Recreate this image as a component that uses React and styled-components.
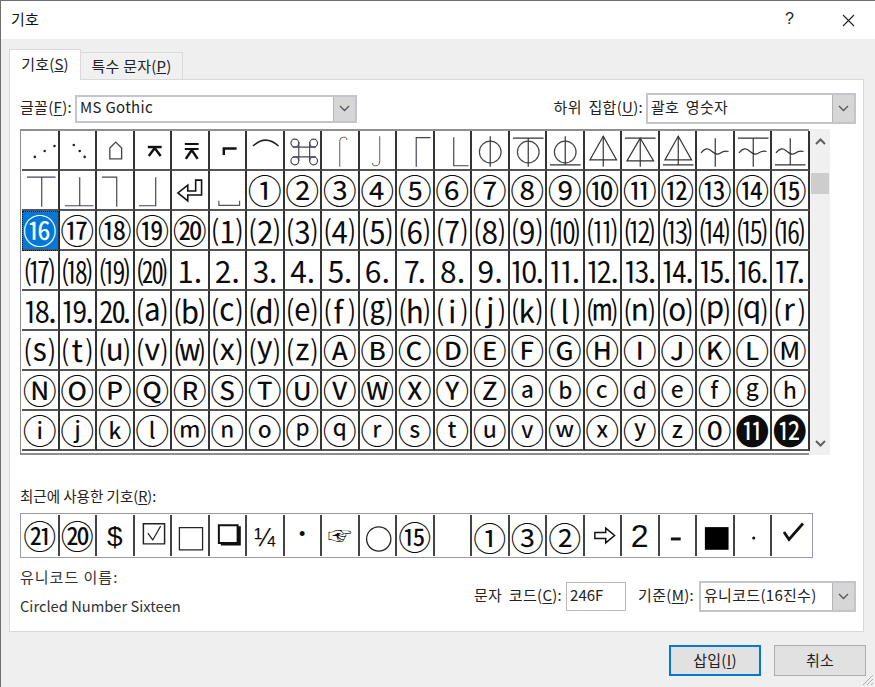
import React from 'react';
import styled, { createGlobalStyle } from 'styled-components';

const GlobalStyle = createGlobalStyle`
  html, body { margin: 0; padding: 0; background: #efefef; }
  body {
    font-family: "Noto Sans CJK KR", "Noto Sans", sans-serif;
    font-size: 15px;
    color: #222;
  }
`;

const Window = styled.div`
  position: relative;
  box-sizing: border-box;
  width: 875px;
  height: 687px;
  overflow: hidden;
  background: #efefef;
  border-top: 1px solid #6f6f6f;
  border-left: 1px solid #6f6f6f;
  display: flex;
  flex-direction: column;
`;

const TitleBar = styled.div`
  height: 38px;
  flex: none;
  background: #fff;
  display: flex;
  align-items: center;
  padding: 0 20px 0 10px;
`;

const Title = styled.div`
  flex: 1;
  font-size: 15px;
  color: #111;
  padding-bottom: 3px;
  letter-spacing: 0.3px;
`;

const HelpMark = styled.span`
  font-family: "Liberation Sans", sans-serif;
  font-size: 16px;
  width: 57px;
  padding-bottom: 2px;
`;

const Tabs = styled.div`
  display: flex;
  align-items: flex-end;
  height: 41px;
  flex: none;
  padding-left: 8px;
  margin-bottom: -1px;
  position: relative;
  z-index: 1;
`;

const Tab = styled.div`
  box-sizing: border-box;
  width: ${p => (p.$active ? 72 : 102)}px;
  height: ${p => (p.$active ? 31 : 28)}px;
  padding-bottom: ${p => (p.$active ? 4 : 1)}px;
  background: ${p => (p.$active ? '#fff' : '#f0f0f0')};
  border: 1px solid #d9d9d9;
  border-bottom: ${p => (p.$active ? 'none' : '1px solid #d9d9d9')};
  border-left: ${p => (p.$active ? '1px solid #d9d9d9' : 'none')};
  display: flex;
  align-items: center;
  justify-content: center;
  white-space: nowrap;
  letter-spacing: 0.2px;
`;

const Panel = styled.div`
  box-sizing: border-box;
  margin-left: 8px;
  width: 855px;
  height: 553px;
  flex: none;
  background: #fff;
  border: 1px solid #d9d9d9;
  padding: 13px 7px 0 10px;
  display: flex;
  flex-direction: column;
`;

const TopRow = styled.div`
  display: flex;
  align-items: center;
  height: 31px;
  flex: none;
`;

const Label = styled.span`
  white-space: nowrap;
  line-height: 20px;
  padding-bottom: 3px;
  margin-right: ${p => p.$gap || 0}px;
  letter-spacing: 0.3px;
  word-spacing: 3px;
  u { text-underline-offset: 2px; }
`;

const Spacer = styled.div`
  flex: 1;
`;

const Combo = styled.div`
  box-sizing: border-box;
  width: ${p => p.$width}px;
  height: ${p => p.$height}px;
  border: 2px solid #c4c4cc;
  display: flex;
  align-items: center;
  background: #fff;
`;

const ComboText = styled.div`
  flex: 1;
  padding: 0 0 3px 3px;
  white-space: nowrap;
  line-height: 20px;
  letter-spacing: 0.3px;
  word-spacing: ${p => (p.$latin ? 0 : 3)}px;
`;

const ComboButton = styled.div`
  width: 21px;
  height: 100%;
  flex: none;
  background: #d6d6d6;
  border-left: 1px solid #b5b5b5;
  display: flex;
  align-items: center;
  justify-content: center;
`;

const GridRow = styled.div`
  display: flex;
  margin-top: 5px;
  flex: none;
`;

const SymbolGrid = styled.div`
  display: grid;
  grid-template-columns: repeat(21, 37.5px);
  grid-auto-rows: 40px;
  width: 789px;
  box-sizing: border-box;
  padding-left: 1px;
  border-top: 2px solid #8e8e8e;
  border-left: 1px solid #8e8e8e;
  border-bottom: 2px solid #8e8e8e;
`;

const Cell = styled.div`
  box-sizing: border-box;
  border-right: 2px solid #333;
  border-bottom: 2px solid #555;
  display: flex;
  align-items: center;
  justify-content: center;
  font-family: "Noto Sans CJK KR", "DejaVu Sans", sans-serif;
  font-size: ${p => (p.$round ? 34 : 30)}px;
  line-height: 38px;
  color: #0c0c0c;
  white-space: nowrap;
  background: ${p => (p.$selected ? '#0078d7' : '#fff')};
  outline: ${p => (p.$selected ? '1px dotted #111' : 'none')};
  outline-offset: -1px;
  ${p => p.$selected && 'color: #fff;'}
`;

const Scrollbar = styled.div`
  width: 20px;
  height: 326px;
  margin-left: 1px;
  background: #f0f0f0;
  display: flex;
  flex-direction: column;
  align-items: center;
  flex: none;
`;

const ScrollBtn = styled.div`
  height: 24px;
  flex: none;
  display: flex;
  align-items: center;
  justify-content: center;
`;

const ScrollThumb = styled.div`
  width: 18px;
  height: 21px;
  margin-top: 20px;
  background: #cdcdcd;
  flex: none;
`;

const RecentLabel = styled.div`
  margin-top: 31px;
  margin-bottom: 7px;
  line-height: 20px;
  flex: none;
  font-size: 14.500px;
  u { text-underline-offset: 2px; }
`;

const RecentStrip = styled.div`
  display: grid;
  grid-template-columns: repeat(21, 37.5px);
  width: 793px;
  height: 45px;
  box-sizing: border-box;
  flex: none;
  padding: 1px 0 1px 1px;
  border: 1px solid #9a9aa2;
`;

const RecentCell = styled.div`
  box-sizing: border-box;
  border-right: ${p => (p.$last ? 'none' : '2px solid #444')};
  display: flex;
  align-items: center;
  justify-content: center;
  font-family: ${p => (p.$latin ? '"Liberation Sans", sans-serif' : '"Noto Sans CJK KR", "DejaVu Sans", sans-serif')};
  font-size: ${p => p.$size || 33}px;
  color: #0c0c0c;
  line-height: 41px;
  height: 41px;
  white-space: nowrap;
  padding-top: ${p => Math.max(p.$drop || 0, 0)}px;
  padding-bottom: ${p => Math.max(-(p.$drop || 0), 0)}px;
`;

const BottomRow = styled.div`
  display: flex;
  margin-top: 11px;
  flex: none;
`;

const InfoColumn = styled.div`
  flex: 1;
  display: flex;
  flex-direction: column;
  gap: 9px;
  margin-top: -2px;
`;

const InfoText = styled.div`
  line-height: 20px;
  white-space: nowrap;
  font-size: ${p => p.$size || 15}px;
  letter-spacing: ${p => p.$track || 0}px;
  color: #333;
`;

const CodeFields = styled.div`
  display: flex;
  align-items: center;
  height: 32px;
  margin-top: 11px;
`;

const CodeInput = styled.div`
  box-sizing: border-box;
  width: 60px;
  height: 29px;
  border: 1px solid #b8b8c0;
  padding-left: 3px;
  line-height: 24px;
  margin: 0 12px 0 4px;
`;

const Footer = styled.div`
  display: flex;
  justify-content: flex-end;
  gap: 13px;
  padding: 13px 9px 0 0;
`;

const Button = styled.div`
  box-sizing: border-box;
  width: 92px;
  height: 31px;
  padding-bottom: 2px;
  background: #e1e1e1;
  border: ${p => (p.$primary ? '2px solid #0078d7' : '1px solid #adadad')};
  display: flex;
  align-items: center;
  justify-content: center;
  letter-spacing: 0.3px;
  u { text-underline-offset: 2px; }
`;

const Grip = styled.svg`
  position: absolute;
  right: 1px;
  bottom: 1px;
`;

const Line = ({ d, w = 1.2, c = '#333', fill = 'none' }) => (
  <path d={d} fill={fill} stroke={c} strokeWidth={w} />
);

const Draw = ({ children, h = 38 }) => (
  <svg width="36" height={h} viewBox={`0 0 36 ${h}`}>{children}</svg>
);

const WAVE = 'M4 22c4-5 7-5 10-2.500s6 5 9 3 6-3 9-2';
const TRI = 'M18.500 5L5 29H32Z';
const Ring = () => <circle cx="18.500" cy="21" r="11" fill="none" stroke="#444" strokeWidth="1.200" />;
const Loop = ({ x, y }) => <circle cx={x} cy={y} r="4" fill="none" stroke="#445" strokeWidth="1.200" />;

const drawn = {
  dotsUp: <><circle cx="13" cy="26" r="1.300" /><circle cx="23" cy="20" r="1.300" /><circle cx="33" cy="15" r="1.300" /></>,
  dotsDown: <><circle cx="14" cy="14" r="1.300" /><circle cx="20" cy="20" r="1.300" /><circle cx="25" cy="26" r="1.300" /></>,
  house: <Line d="M13 28V17L19 11L25 17V28Z" w={1.300} c="#444" />,
  barUp: <><Line d="M13 16H27" w={2.500} c="#111" /><Line d="M14 25L20 17L26 25" w={2.500} c="#111" /></>,
  barUpTwo: <><Line d="M13 13H27M13 18H27" w={2} c="#111" /><Line d="M14 28L20 19L26 28" w={2.500} c="#111" /></>,
  corner: <Line d="M14 24V17.500H27" w={2.500} c="#111" />,
  arc: <Line d="M6 15Q19 3 32 15" w={1.500} c="#222" />,
  looped: <><Line d="M14 11V30M25 11V30M8 16H31M8 26H31" w={1.200} c="#445" /><Loop x={10} y={12} /><Loop x={29} y={12} /><Loop x={10} y={30} /><Loop x={29} y={30} /></>,
  integralTop: <Line d="M18 36V10Q18 6 22 6Q26 6 25 9" w={1} c="#654" />,
  integralBottom: <Line d="M20 5V30Q20 35 16 35Q12 35 13 32" w={1} c="#654" />,
  brTopLeft: <Line d="M19.500 36V6.500H34" w={1.200} c="#445" />,
  brBottomLeft: <Line d="M19 6V35H34" w={1.200} c="#445" />,
  circleLine: <><Ring /><Line d="M18.500 5V36" /></>,
  circleTop: <><Ring /><Line d="M18.500 7V36M3 7H34" /></>,
  circleBottom: <><Ring /><Line d="M18.500 5V34M3 34H34" /></>,
  tri: <><Line d={TRI} /><Line d="M18.500 5V36" /></>,
  triTop: <><Line d="M18.500 7L5 30H32Z" /><Line d="M18.500 7V36M3 7H34" /></>,
  triBottom: <><Line d={TRI} /><Line d="M18.500 5V34M3 34H34" /></>,
  wave: <><Line d={WAVE} /><Line d="M18.500 7V36" /></>,
  waveTop: <><Line d={WAVE} /><Line d="M18.500 7V36M3 7H34" /></>,
  waveBottom: <><Line d={WAVE} /><Line d="M18.500 7V34M3 34H34" /></>,
  teeTop: <Line d="M5 6H34M20 6V36" w={1.200} c="#445" />,
  teeBottom: <Line d="M5 35H34M20 6V35" w={1.200} c="#445" />,
  cornerRight: <Line d="M5 6H20V36" w={1.200} c="#445" />,
  cornerLeft: <Line d="M4 35H21V6" w={1.200} c="#445" />,
  returnKey: <Line d="M24 9H30V24H16V30L6 22L16 14V20H24Z" w={1.600} c="#111" />,
  bracket: <Line d="M9 30V34.500H30V30" w={1.200} c="#555" />,
};

const firstRows = [
  'dotsUp', 'dotsDown', 'house', 'barUp', 'barUpTwo', 'corner', 'arc', 'looped', 'integralTop', 'integralBottom',
  'brTopLeft', 'brBottomLeft', 'circleLine', 'circleTop', 'circleBottom', 'tri', 'triTop', 'triBottom', 'wave',
  'waveTop', 'waveBottom', 'teeTop', 'teeBottom', 'cornerRight', 'cornerLeft', 'returnKey', 'bracket',
];

const textCells = Array.from(
  '①②③④⑤⑥⑦⑧⑨⑩⑪⑫⑬⑭⑮⑯⑰⑱⑲⑳⑴⑵⑶⑷⑸⑹⑺⑻⑼⑽⑾⑿⒀⒁⒂⒃⒄⒅⒆⒇⒈⒉⒊⒋⒌⒍⒎⒏⒐⒑⒒⒓⒔⒕⒖⒗⒘⒙⒚⒛' +
    '⒜⒝⒞⒟⒠⒡⒢⒣⒤⒥⒦⒧⒨⒩⒪⒫⒬⒭⒮⒯⒰⒱⒲⒳⒴⒵ⒶⒷⒸⒹⒺⒻⒼⒽⒾⒿⓀⓁⓂⓃⓄⓅⓆⓇⓈⓉⓊⓋⓌⓍⓎⓏ' +
    'ⓐⓑⓒⓓⓔⓕⓖⓗⓘⓙⓚⓛⓜⓝⓞⓟⓠⓡⓢⓣⓤⓥⓦⓧⓨⓩ⓪⓫⓬'
);

const isRound = c => (c >= '①' && c <= '⑳') || (c >= 'Ⓐ' && c <= 'ⓩ') || c === '⓪' || c === '⓫' || c === '⓬';

const recent = [
  { t: '㉑', drop: -1 }, { t: '⑳', drop: -1 }, { t: '$', latin: true, size: 28, drop: 2 },
  { svg: <><Line d="M8.500 8.500H30V29H8.500Z" w={1.500} c="#222" /><Line d="M13 18L18 25L26 11" w={1.200} c="#222" /></> },
  { svg: <Line d="M7.500 12.500H31V35H7.500Z" w={1.300} c="#223" /> },
  { svg: <><Line d="M9 10H28V28H9Z" w={2} c="#111" /><Line d="M11 29H29.500V11" w={3.500} c="#111" /></> },
  { t: '¼', latin: true, size: 25, drop: 3 }, { t: '•', latin: true, size: 18, drop: -3 },
  { t: '☞', size: 24, drop: -5 },
  { svg: <circle cx="19" cy="24" r="12.300" fill="none" stroke="#222" strokeWidth="1.300" /> },
  { t: '⑮', drop: 2 }, { t: '' }, { t: '①', drop: 3 }, { t: '③', drop: 3 }, { t: '②', drop: 3 },
  { svg: <Line d="M10 17.500H21V13L30 20.500L21 28V23.500H10Z" w={1.500} c="#111" /> },
  { t: '2', latin: true, size: 32, drop: 2 },
  { svg: <Line d="M11 24H21" w={3} c="#111" /> },
  { svg: <path d="M8 12H32V35H8Z" fill="#000" /> },
  { svg: <circle cx="19" cy="23" r="1.600" fill="#111" /> },
  { svg: <Line d="M11 17L16 24.500L30 8.500" w={2.800} c="#111" /> },
];

const Chevron = ({ color = '#555', heavy, up }) => (
  <svg width="11" height="7" viewBox="0 0 11 7">
    <path d={up ? 'M1 6L5.500 1.500L10 6' : 'M1 1L5.500 5.500L10 1'} fill="none" stroke={color} strokeWidth={heavy ? 2 : 1.300} />
  </svg>
);

export default function App() {
  return (
    <>
      <GlobalStyle />
      <Window>
        <TitleBar>
          <Title>기호</Title>
          <HelpMark>?</HelpMark>
          <svg width="13" height="13" viewBox="0 0 13 13">
            <path d="M1 1L12 12M12 1L1 12" stroke="#222" strokeWidth="1.100" />
          </svg>
        </TitleBar>
        <Tabs>
          <Tab $active>기호(<u>S</u>)</Tab>
          <Tab>특수 문자(<u>P</u>)</Tab>
        </Tabs>
        <Panel>
          <TopRow>
            <Label $gap={3}>글꼴(<u>F</u>):</Label>
            <Combo $width={282} $height={28}>
              <ComboText $latin>MS Gothic</ComboText>
              <ComboButton><Chevron /></ComboButton>
            </Combo>
            <Spacer />
            <Label $gap={3}>하위 집합(<u>U</u>):</Label>
            <Combo $width={210} $height={31}>
              <ComboText>괄호 영숫자</ComboText>
              <ComboButton><Chevron /></ComboButton>
            </Combo>
          </TopRow>
          <GridRow>
            <SymbolGrid>
              {firstRows.map(k => (
                <Cell key={k}><Draw><g fill="#222">{drawn[k]}</g></Draw></Cell>
              ))}
              {textCells.map(c => (
                <Cell key={c} $round={isRound(c)} $selected={c === '⑯'}>{c}</Cell>
              ))}
            </SymbolGrid>
            <Scrollbar>
              <ScrollBtn><Chevron up heavy color="#606060" /></ScrollBtn>
              <ScrollThumb />
              <Spacer />
              <ScrollBtn><Chevron heavy color="#606060" /></ScrollBtn>
            </Scrollbar>
          </GridRow>
          <RecentLabel>최근에 사용한 기호(<u>R</u>):</RecentLabel>
          <RecentStrip>
            {recent.map((r, i) => (
              <RecentCell key={i} $latin={r.latin} $size={r.size} $drop={r.drop} $last={i === 20}>
                {r.svg ? <Draw h={41}>{r.svg}</Draw> : r.t}
              </RecentCell>
            ))}
          </RecentStrip>
          <BottomRow>
            <InfoColumn>
              <InfoText $track={1}>유니코드 이름:</InfoText>
              <InfoText $size={14.700}>Circled Number Sixteen</InfoText>
            </InfoColumn>
            <CodeFields>
              <Label $gap={0}>문자 코드(<u>C</u>):</Label>
              <CodeInput>246F</CodeInput>
              <Label $gap={5}>기준(<u>M</u>):</Label>
              <Combo $width={157} $height={31}>
                <ComboText>유니코드(16진수)</ComboText>
                <ComboButton><Chevron /></ComboButton>
              </Combo>
            </CodeFields>
          </BottomRow>
        </Panel>
        <Footer>
          <Button $primary>삽입(<u>I</u>)</Button>
          <Button>취소</Button>
        </Footer>
        <Grip width="14" height="14" viewBox="0 0 14 14">
          <path d="M13 3L3 13M13 7L7 13M13 11L11 13" stroke="#b0b0b0" strokeWidth="1" />
        </Grip>
      </Window>
    </>
  );
}
